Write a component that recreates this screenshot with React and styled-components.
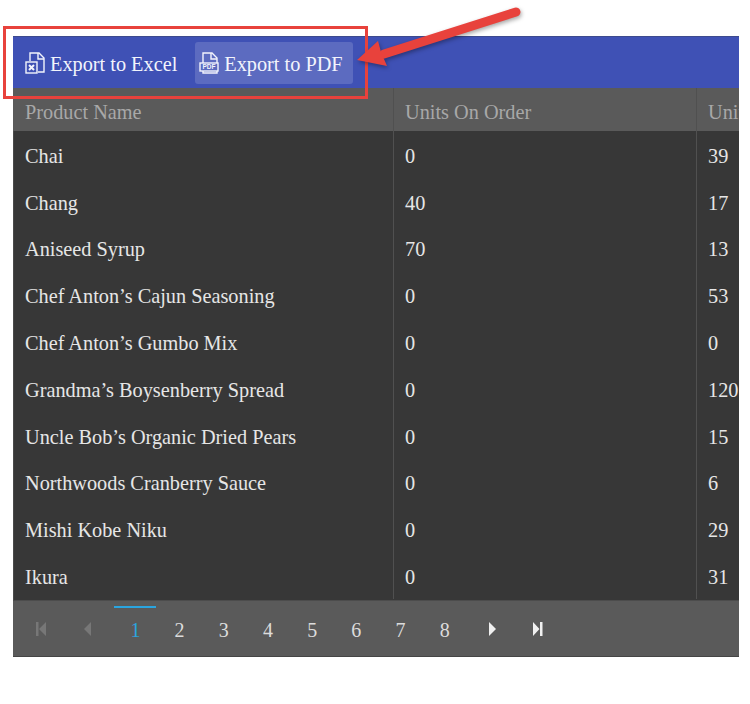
import React from 'react';
import styled, { createGlobalStyle } from 'styled-components';

const GlobalStyle = createGlobalStyle`
  html, body {
    margin: 0;
    padding: 0;
    background: #ffffff;
  }
`;

const Page = styled.div`
  position: relative;
  width: 750px;
  height: 704px;
  box-sizing: border-box;
  padding: 36px 11px 0 13px;
  overflow: hidden;
  font-family: "Liberation Serif", "Times New Roman", serif;
`;

const Grid = styled.div`
  width: 726px;
  height: 621px;
  display: flex;
  flex-direction: column;
  background: #373737;
  box-shadow: inset 1px 0 0 #4a4a4a;
  overflow: hidden;
`;

const Toolbar = styled.div`
  height: 52px;
  box-sizing: border-box;
  display: flex;
  align-items: center;
  gap: 7px;
  background: #3f51b5;
  border-top: 1px solid #3d4a8e;
`;

const ToolButton = styled.div`
  height: 42px;
  box-sizing: border-box;
  display: flex;
  align-items: center;
  gap: 5px;
  padding: 0 ${p => (p.$hover ? '10px' : '11px')} 0 ${p => (p.$hover ? '4px' : '12px')};
  border-radius: 3px;
  color: #f2f4fc;
  font-size: 20.3px;
  background: ${p => (p.$hover ? '#5c6bc0' : 'transparent')};
`;

const ToolLabel = styled.span`
  margin-top: 4px;
`;

const Row = styled.div`
  display: grid;
  grid-template-columns: 380px 303px 42px;
  height: ${p => (p.$head ? '43px' : '46.8px')};
  padding-left: 1px;
  background: ${p => (p.$head ? '#5a5a5a' : 'transparent')};
  color: ${p => (p.$head ? '#a8a8a8' : '#e6e6e6')};
  font-size: 20.3px;
`;

const Cell = styled.div`
  display: flex;
  align-items: center;
  box-sizing: border-box;
  padding: ${p => (p.$head ? '6px' : '4px')} 0 0 11px;
  white-space: nowrap;
  overflow: hidden;
  border-right: ${p => (p.$last ? '0' : '1px solid #505050')};
`;

const Body = styled.div`
  flex: 1;
`;

const Pager = styled.div`
  height: 57px;
  box-sizing: border-box;
  display: flex;
  align-items: stretch;
  gap: 2.2px;
  padding: 5px 0 4px 6px;
  background: #5a5a5a;
  border-top: 1px solid #4c4c4c;
  border-bottom: 1px solid #454545;
`;

const PageNav = styled.div`
  width: 45.5px;
  display: flex;
  align-items: center;
  justify-content: center;
  color: ${p => (p.$off ? '#777777' : '#f0f0f0')};
`;

const PageNumber = styled.div`
  width: 42px;
  box-sizing: border-box;
  display: flex;
  align-items: center;
  justify-content: center;
  font-size: 20px;
  color: ${p => (p.$active ? '#2aa5e0' : '#dcdcdc')};
  border-top: 2px solid ${p => (p.$active ? '#2aa5e0' : 'transparent')};
`;

const Highlight = styled.div`
  position: absolute;
  left: 3px;
  top: 26px;
  width: 365px;
  height: 73px;
  box-sizing: border-box;
  border: 3px solid #e8423c;
`;

const ArrowMark = styled.svg`
  position: absolute;
  left: 350px;
  top: 0;
  filter: drop-shadow(1px 2px 2px rgba(0, 0, 0, 0.35));
`;

const products = [
  ['Chai', '0', '39'],
  ['Chang', '40', '17'],
  ['Aniseed Syrup', '70', '13'],
  ['Chef Anton’s Cajun Seasoning', '0', '53'],
  ['Chef Anton’s Gumbo Mix', '0', '0'],
  ['Grandma’s Boysenberry Spread', '0', '120'],
  ['Uncle Bob’s Organic Dried Pears', '0', '15'],
  ['Northwoods Cranberry Sauce', '0', '6'],
  ['Mishi Kobe Niku', '0', '29'],
  ['Ikura', '0', '31'],
];

function ExcelIcon() {
  return (
    <svg width="20" height="22" viewBox="0 0 20 22" fill="none" stroke="currentColor" strokeWidth="1.4">
      <path d="M5 9V1h9l5 5v14h-6" />
      <path d="M13 1v6h6" />
      <rect x="1" y="10" width="11" height="11" fill="#3f51b5" />
      <path d="M4 13l5 5M9 13l-5 5" strokeWidth="2" />
    </svg>
  );
}

function PdfIcon() {
  return (
    <svg width="20" height="22" viewBox="0 0 20 22" fill="none" stroke="currentColor" strokeWidth="1.4">
      <path d="M4 11V1h9l5 5v5M4 19v2h14v-2" />
      <path d="M12 1v6h6" />
      <rect x="1" y="11" width="18" height="8" fill="#5c6bc0" />
      <text x="10" y="17.4" fontSize="6.5" fontFamily="Liberation Sans" fontWeight="700" textAnchor="middle" fill="currentColor" stroke="none">
        PDF
      </text>
    </svg>
  );
}

function NavIcon({ kind }) {
  return (
    <svg width="14" height="16" viewBox="0 0 14 16" fill="currentColor">
      {kind === 'first' && <path d="M1 1h2.5v14H1zM11 1v14L4 8z" />}
      {kind === 'prev' && <path d="M9 1v14L2 8z" />}
      {kind === 'next' && <path d="M5 1v14l7-7z" />}
      {kind === 'last' && <path d="M2 1v14l6.5-7zM9 1h2.5v14H9z" />}
    </svg>
  );
}

export default function App() {
  return (
    <Page>
      <GlobalStyle />
      <Grid>
        <Toolbar>
          <ToolButton>
            <ExcelIcon />
            <ToolLabel>Export to Excel</ToolLabel>
          </ToolButton>
          <ToolButton $hover>
            <PdfIcon />
            <ToolLabel>Export to PDF</ToolLabel>
          </ToolButton>
        </Toolbar>
        <Row $head>
          <Cell $head>Product Name</Cell>
          <Cell $head>Units On Order</Cell>
          <Cell $head $last>Units In Stock</Cell>
        </Row>
        <Body>
          {products.map(([name, onOrder, inStock]) => (
            <Row key={name}>
              <Cell>{name}</Cell>
              <Cell>{onOrder}</Cell>
              <Cell $last>{inStock}</Cell>
            </Row>
          ))}
        </Body>
        <Pager>
          <PageNav $off><NavIcon kind="first" /></PageNav>
          <PageNav $off><NavIcon kind="prev" /></PageNav>
          {[1, 2, 3, 4, 5, 6, 7, 8].map(n => (
            <PageNumber key={n} $active={n === 1}>{n}</PageNumber>
          ))}
          <PageNav><NavIcon kind="next" /></PageNav>
          <PageNav><NavIcon kind="last" /></PageNav>
        </Pager>
      </Grid>
      <Highlight />
      <ArrowMark width="180" height="70" viewBox="0 0 180 70">
        <path d="M166 12L34 54" stroke="#e8423c" strokeWidth="9" strokeLinecap="round" />
        <path d="M7 60L28 41L31 52L37 66Z" fill="#e8423c" />
      </ArrowMark>
    </Page>
  );
}
